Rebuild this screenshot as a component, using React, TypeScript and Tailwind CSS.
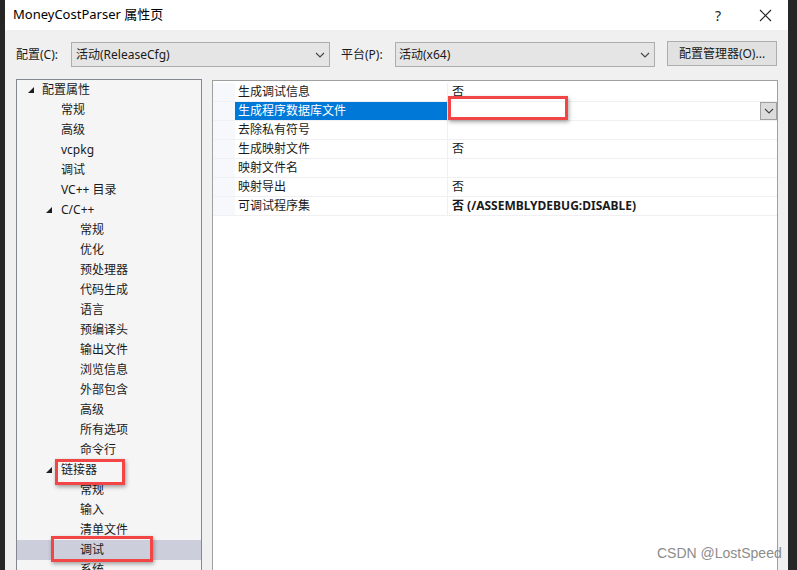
import React from "react";

type TreeItem = { label: string; level: number; expand?: boolean; selected?: boolean };

const tree: TreeItem[] = [
  { label: "配置属性", level: 0, expand: true },
  { label: "常规", level: 1 },
  { label: "高级", level: 1 },
  { label: "vcpkg", level: 1 },
  { label: "调试", level: 1 },
  { label: "VC++ 目录", level: 1 },
  { label: "C/C++", level: 1, expand: true },
  { label: "常规", level: 2 },
  { label: "优化", level: 2 },
  { label: "预处理器", level: 2 },
  { label: "代码生成", level: 2 },
  { label: "语言", level: 2 },
  { label: "预编译头", level: 2 },
  { label: "输出文件", level: 2 },
  { label: "浏览信息", level: 2 },
  { label: "外部包含", level: 2 },
  { label: "高级", level: 2 },
  { label: "所有选项", level: 2 },
  { label: "命令行", level: 2 },
  { label: "链接器", level: 1, expand: true },
  { label: "常规", level: 2 },
  { label: "输入", level: 2 },
  { label: "清单文件", level: 2 },
  { label: "调试", level: 2, selected: true },
  { label: "系统", level: 2 },
];

const props: { name: string; value: string; selected?: boolean; bold?: boolean }[] = [
  { name: "生成调试信息", value: "否" },
  { name: "生成程序数据库文件", value: "", selected: true },
  { name: "去除私有符号", value: "" },
  { name: "生成映射文件", value: "否" },
  { name: "映射文件名", value: "" },
  { name: "映射导出", value: "否" },
  { name: "可调试程序集", value: "否 (/ASSEMBLYDEBUG:DISABLE)", bold: true },
];

function Tri() {
  return (
    <svg width="6" height="6" viewBox="0 0 6 6" className="shrink-0">
      <polygon points="6,0 6,6 0,6" fill="#1e1e1e" />
    </svg>
  );
}

function Chevron() {
  return (
    <svg width="10" height="6" viewBox="0 0 10 6" className="shrink-0">
      <polyline points="1,1 5,5 9,1" fill="none" stroke="#444" strokeWidth="1.1" />
    </svg>
  );
}

function TreeRow({ item }: { item: TreeItem }) {
  let content: React.ReactNode;
  if (item.expand) {
    const ml = item.level === 0 ? "ml-[11px]" : "ml-[29px]";
    const gap = item.level === 0 ? "gap-[8px]" : "gap-[9px]";
    content = (
      <div className={`flex items-center ${ml} ${gap}`}>
        <Tri />
        <span>{item.label}</span>
      </div>
    );
  } else {
    const ml = item.level === 1 ? "ml-[44px]" : "ml-[63px]";
    content = <span className={ml}>{item.label}</span>;
  }
  return (
    <div
      className={`h-[20px] flex items-center leading-[20px] whitespace-nowrap ${
        item.selected ? "bg-[#cccedb]" : ""
      }`}
    >
      {content}
    </div>
  );
}

export default function App() {
  return (
    <div className="w-[797px] h-[570px] overflow-hidden flex bg-[#262626] font-['Noto_Sans','Noto_Sans_CJK_SC',sans-serif] text-[12px] text-[#1a1a1a]">
      <div className="w-[5px] shrink-0 bg-[#262626]" />
      <div className="w-[783px] shrink-0 flex flex-col">
        {/* Title bar */}
        <div className="h-[30px] shrink-0 bg-white flex items-center">
          <span className="ml-[8px] text-[13px] text-black">MoneyCostParser 属性页</span>
          <div className="flex-1" />
          <span className="text-[14px] text-[#222] w-[10px] text-center mr-[36px]">?</span>
          <svg width="13" height="13" viewBox="0 0 13 13" className="mr-[16px]">
            <line x1="1" y1="1" x2="12" y2="12" stroke="#222" strokeWidth="1.1" />
            <line x1="12" y1="1" x2="1" y2="12" stroke="#222" strokeWidth="1.1" />
          </svg>
        </div>
        {/* Body */}
        <div className="flex-1 bg-[#f0f0f0] flex flex-col pl-[11px] pr-[10px]">
          <div className="mt-[12px] h-[25px] flex items-center shrink-0">
            <span className="w-[55px]">配置(C):</span>
            <div className="w-[259px] h-[25px] bg-[#e5e5e5] border border-[#adadad] flex items-center pl-[4px] pr-[4px]">
              <span className="flex-1">活动(ReleaseCfg)</span>
              <Chevron />
            </div>
            <span className="ml-[11px] w-[54px]">平台(P):</span>
            <div className="w-[260px] h-[25px] bg-[#e5e5e5] border border-[#adadad] flex items-center pl-[3px] pr-[4px]">
              <span className="flex-1">活动(x64)</span>
              <Chevron />
            </div>
            <div className="ml-[12px] w-[110px] h-[25px] -mt-[2px] bg-[#e1e1e1] border border-[#adadad] flex items-center justify-center">
              配置管理器(O)...
            </div>
          </div>
          <div className="mt-[12px] flex flex-1 min-h-0">
            {/* Tree */}
            <div className="relative w-[186px] shrink-0 border border-[#828790] border-b-0 bg-[#f5f5f5] pt-0 overflow-hidden">
              {tree.map((t, i) => (
                <TreeRow key={i} item={t} />
              ))}
              <div className="absolute left-[38px] top-[379px] w-[70px] h-[26px] border-[3px] border-[#f24545] shadow-[1px_2px_4px_rgba(0,0,0,0.35)]" />
              <div className="absolute left-[34px] top-[456px] w-[102px] h-[26px] border-[3px] border-[#f24545] shadow-[1px_2px_4px_rgba(0,0,0,0.35)]" />
            </div>
            {/* Property grid */}
            <div className="relative ml-[10px] flex-1 border border-[#a0a0a0] border-b-0 bg-white mt-[1px] pt-[2px]">
              <div className="flex flex-col">
                {props.map((p, i) => (
                  <div key={i} className="h-[19px] flex border-b border-[#f0f0f4]">
                    <div className="w-[22px] shrink-0 bg-[#f7f8fb]" />
                    <div
                      className={`w-[213px] shrink-0 pl-[3px] flex items-center whitespace-nowrap border-r border-[#f0f0f4] ${
                        p.selected ? "bg-[#0078d7] text-white" : ""
                      }`}
                    >
                      {p.name}
                    </div>
                    <div className={`flex-1 pl-[4px] flex items-center whitespace-nowrap ${p.bold ? "font-bold" : ""}`}>
                      <span className="flex-1">{p.value}</span>
                      {p.selected && (
                        <div className="w-[17px] h-[18px] bg-[#dcdcdc] border border-[#a0a0a0] flex items-center justify-center">
                          <Chevron />
                        </div>
                      )}
                    </div>
                  </div>
                ))}
              </div>
              <div className="absolute left-[235px] top-[15px] w-[120px] h-[24px] border-[3px] border-[#f24545] shadow-[1px_2px_4px_rgba(0,0,0,0.35)]" />
            </div>
          </div>
        </div>
      </div>
      <div className="w-[9px] shrink-0 bg-[#262626]" />
      <span className="absolute left-[657px] top-[543px] text-[14px] text-[#8c8c8c] font-['Liberation_Sans',sans-serif]">
        CSDN @LostSpeed
      </span>
    </div>
  );
}
